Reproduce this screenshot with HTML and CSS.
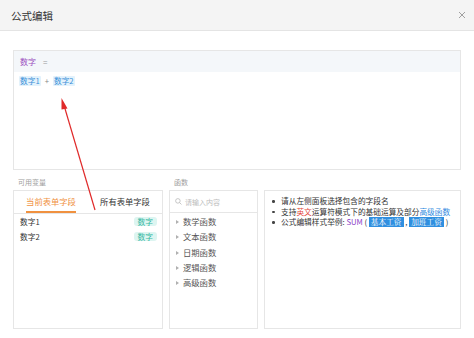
FILE: index.html
```html
<!DOCTYPE html>
<html lang="zh-CN">
<head>
    <meta charset="UTF-8">
    <meta name="viewport" content="width=device-width, initial-scale=1.0">
    <title>公式编辑</title>
    <link rel="stylesheet" href="styles.css">
</head>
<body>
    <div class="dialog">
        <div class="dialog-header">
            <span class="dialog-title">公式编辑</span>
            <span class="dialog-close">
                <svg width="8" height="8" viewBox="0 0 8 8"><path d="M1 1L7 7M7 1L1 7" stroke="#a0a0a0" stroke-width="1"/></svg>
            </span>
        </div>
        <div class="dialog-body">
            <div class="editor">
                <div class="editor-head"><span class="field-name">数字</span><span class="eq">=</span></div>
                <div class="editor-expr"><span class="token">数字1</span><span class="op">+</span><span class="token">数字2</span></div>
            </div>

            <div class="panels">
                <div class="col-label">可用变量</div>
                <div class="col-label">函数</div>
                <div class="col-label"></div>

                <div class="panel">
                    <div class="tabs">
                        <div class="tab active"><span>当前表单字段</span></div>
                        <div class="tab"><span>所有表单字段</span></div>
                    </div>
                    <ul class="var-list">
                        <li><span>数字1</span><span class="type-tag">数字</span></li>
                        <li><span>数字2</span><span class="type-tag">数字</span></li>
                    </ul>
                </div>

                <div class="panel">
                    <div class="search">
                        <svg width="7" height="7" viewBox="0 0 8 8"><circle cx="3.3" cy="3.3" r="2.6" fill="none" stroke="#b8b8b8" stroke-width="0.9"/><path d="M5.2 5.2L7.4 7.4" stroke="#b8b8b8" stroke-width="0.9"/></svg>
                        <span>请输入内容</span>
                    </div>
                    <ul class="func-list">
                        <li>数学函数</li>
                        <li>文本函数</li>
                        <li>日期函数</li>
                        <li>逻辑函数</li>
                        <li>高级函数</li>
                    </ul>
                </div>

                <div class="panel help">
                    <ul class="tips">
                        <li>请从左侧面板选择包含的字段名</li>
                        <li>支持<span class="red">英文</span>运算符模式下的基础运算及部分<span class="link">高级函数</span></li>
                        <li>公式编辑样式举例: <span class="purple">SUM</span> ( <span class="sample">基本工资</span> , <span class="sample">加班工资</span> )</li>
                    </ul>
                </div>
            </div>
        </div>

        <svg class="pointer" width="474" height="338" viewBox="0 0 474 338">
            <path d="M95 210L64.5 107" stroke="#e02a2a" stroke-width="1.2" fill="none"/>
            <path d="M61.5 98L67.5 108.5L61.5 109.5Z" fill="#e02a2a"/>
        </svg>
    </div>
</body>
</html>
```

FILE: styles.css
```css
body {
    margin: 0;
    background: #fff;
    color: #333;
    font-family: "Noto Sans CJK SC", "Noto Sans", sans-serif;
}
ul {
    list-style: none;
    margin: 0;
    padding: 0;
}
.dialog {
    position: relative;
    width: 474px;
    height: 338px;
}
.dialog-header {
    height: 31px;
    background: #f4f4f4;
    border-bottom: 1px solid #e4e4e4;
    display: flex;
    align-items: center;
    justify-content: space-between;
    padding: 0 11px;
    box-sizing: border-box;
}
.dialog-title {
    font-size: 10.5px;
    color: #333;
}
.dialog-close {
    display: flex;
    margin-right: -3px;
}
.dialog-body {
    padding: 19px 13px 0 13px;
}
.editor {
    height: 120px;
    border: 1px solid #e6e6e6;
    box-sizing: border-box;
}
.editor-head {
    height: 21px;
    background: #f4f7fa;
    display: flex;
    align-items: center;
    padding: 0 6px;
    font-size: 8px;
}
.field-name {
    color: #9b4fc0;
}
.eq {
    color: #999;
    margin-left: 7px;
}
.editor-expr {
    display: flex;
    align-items: center;
    padding: 3px 5px;
    font-size: 7.7px;
}
.token {
    background: #e3f2fc;
    color: #3a8fd8;
    padding: 0 1px;
    line-height: 10px;
    border-radius: 1px;
}
.op {
    color: #888;
    margin: 0 4px;
}
.panels {
    display: grid;
    grid-template-columns: 150px 89px 197px;
    grid-template-rows: 14px 139px;
    column-gap: 6px;
    margin-top: 6px;
}
.col-label {
    font-size: 7px;
    color: #a0a0a0;
    padding-left: 5px;
    line-height: 12px;
}
.panel {
    border: 1px solid #e6e6e6;
    box-sizing: border-box;
    font-size: 7.7px;
}
.tabs {
    display: flex;
    height: 22px;
    border-bottom: 1px solid #e6e6e6;
}
.tab {
    flex: 1;
    display: flex;
    justify-content: center;
    font-size: 8.3px;
    color: #333;
}
.tab span {
    display: block;
    line-height: 20px;
    height: 20px;
    padding-top: 0;
}
.tab.active span {
    color: #f0913f;
    border-bottom: 2px solid #f0913f;
}
.var-list li {
    display: flex;
    justify-content: space-between;
    align-items: center;
    height: 15px;
    padding: 0 5px 0 6px;
}
.type-tag {
    background: #ddf5f1;
    color: #35b8a3;
    line-height: 9px;
    padding: 0 4px;
    border-radius: 3px;
}
.search {
    height: 21px;
    border-bottom: 1px solid #e6e6e6;
    display: flex;
    align-items: center;
    padding-left: 5px;
    gap: 3px;
    color: #bdbdbd;
    font-size: 7px;
}
.func-list {
    padding-top: 1px;
}
.func-list li {
    height: 15.3px;
    line-height: 15.3px;
    padding-left: 13px;
    position: relative;
    font-size: 8.3px;
    color: #555;
}
.func-list li::before {
    content: "";
    position: absolute;
    left: 6px;
    top: 6px;
    border-left: 3px solid #b0b0b0;
    border-top: 2px solid transparent;
    border-bottom: 2px solid transparent;
}
.help {
    padding-top: 5px;
}
.tips li {
    position: relative;
    padding-left: 16px;
    line-height: 10.5px;
    color: #333;
    white-space: nowrap;
}
.tips li::before {
    content: "";
    position: absolute;
    left: 7px;
    top: 4px;
    width: 2.5px;
    height: 2.5px;
    background: #444;
    border-radius: 50%;
}
.red {
    color: #e5483b;
}
.link {
    color: #2f8ae0;
}
.purple {
    color: #8c3fc7;
}
.sample {
    background: #2f8fe0;
    color: #fff;
    font-family: "Noto Serif CJK SC", "Liberation Serif", serif;
    padding: 0 2px;
    line-height: 10px;
    display: inline-block;
}
.pointer {
    position: absolute;
    left: 0;
    top: 0;
    pointer-events: none;
}
```
